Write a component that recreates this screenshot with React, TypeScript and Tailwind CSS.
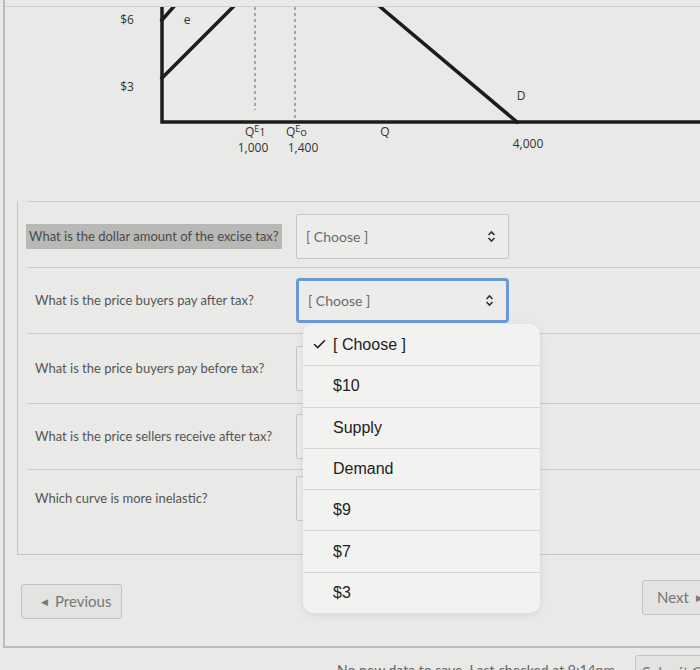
import { Check } from 'lucide-react';

const questions = [
	{ text: 'What is the dollar amount of the excise tax?', h: 'h-[66px] pt-[4px]', highlight: true, visible: true },
	{ text: 'What is the price buyers pay after tax?', h: 'h-[66px]', focused: true, visible: true },
	{ text: 'What is the price buyers pay before tax?', h: 'h-[70px]' },
	{ text: 'What is the price sellers receive after tax?', h: 'h-[66px]' },
	{ text: 'Which curve is more inelastic?', h: 'h-[85px] items-start pt-[6px]' },
];

const options = ['[ Choose ]', '$10', 'Supply', 'Demand', '$9', '$7', '$3'];

function Arrows() {
	return (
		<svg width="9" height="13" viewBox="0 0 9 13" fill="none" stroke="#333" strokeWidth="1.6">
			<path d="M1.5 5 L4.5 2 L7.5 5" />
			<path d="M1.5 8 L4.5 11 L7.5 8" />
		</svg>
	);
}

function Graph() {
	const label = { fontFamily: '"Open Sans", sans-serif', fontSize: 12, fill: '#333' };
	return (
		<svg width="600" height="153" viewBox="100 7 600 153" className="ml-[95px] block">
			<g stroke="#1c1c1c" strokeWidth="3.5" fill="none" strokeLinecap="square">
				<path d="M162 0 L162 122 L700 122" />
				<path d="M162 78 L240 0" />
				<path d="M162 20 L177 3" />
				<path d="M372 0 L517 122" />
			</g>
			<g stroke="#666" strokeWidth="1" strokeDasharray="3 3">
				<path d="M255 7 L255 110" />
				<path d="M295 7 L295 120" />
			</g>
			<text x="127" y="24" textAnchor="middle" {...label}>$6</text>
			<text x="127" y="91" textAnchor="middle" {...label}>$3</text>
			<text x="187" y="24" textAnchor="middle" {...label}>e</text>
			<text x="521" y="100" textAnchor="middle" {...label}>D</text>
			<text x="385" y="136" textAnchor="middle" {...label}>Q</text>
			<text x="245" y="136" {...label}>
				Q<tspan dy="-4" fontSize="9">E</tspan><tspan dy="4" fontSize="11">1</tspan>
			</text>
			<text x="286" y="136" {...label}>
				Q<tspan dy="-4" fontSize="9">E</tspan><tspan dy="4" fontSize="11">o</tspan>
			</text>
			<text x="253" y="152" textAnchor="middle" {...label}>1,000</text>
			<text x="303" y="152" textAnchor="middle" {...label}>1,400</text>
			<text x="528" y="148" textAnchor="middle" {...label}>4,000</text>
		</svg>
	);
}

export default function App() {
	return (
		<div className="relative w-[700px] h-[670px] overflow-hidden bg-[#e9e9e7] font-['Lato',sans-serif]">
			<div className="ml-[3px] h-[648px] border-l-2 border-b-2 border-[#bcbcba] pt-[6px]">
				<div className="border-t border-[#cfcfcd]">
					<Graph />
				</div>

				<div className="mt-[41px] ml-[12px] border-l border-b border-[#c4c4c2]">
					{questions.map((q, i) => (
						<div key={i} className={`ml-[9px] border-t border-[#cbcbc9] flex items-center ${q.h}`}>
							<div className="w-[269px] h-[45px] shrink-0 flex items-center">
								<span
									className={`py-[4px] text-[13px] leading-[17px] ${
										q.highlight
											? 'px-[3px] -ml-[1px] bg-[#b8b8b6] text-[#4a4a4a]'
											: 'px-2 text-[#555]'
									}`}
								>
									{q.text}
								</span>
							</div>
							<div
								className={`w-[213px] h-[45px] flex items-center justify-between pl-[9px] pr-[12px] bg-[#ececea] ${
									q.focused
										? 'border-[3px] border-[#6b9bcd] rounded-[4px]'
										: 'border border-[#c6c6c4] rounded-[2px]'
								}`}
							>
								{q.visible && <span className="text-[14px] text-[#6a6a6a]">[ Choose ]</span>}
								<Arrows />
							</div>
						</div>
					))}
				</div>

				<div className="flex items-start mt-[29px]">
					<button className="ml-[16px] w-[101px] h-[35px] flex items-center gap-[7px] pl-[19px] border border-[#c3c3c1] rounded-[3px] bg-[#e3e3e1] text-[15px] text-[#777]">
						<span className="text-[9px]">◀</span>
						Previous
					</button>
					<button className="ml-auto mr-[-20px] -mt-[4px] w-[78px] h-[35px] flex items-center gap-[7px] pl-[14px] border border-[#c3c3c1] rounded-[3px] bg-[#e3e3e1] text-[15px] text-[#777]">
						Next
						<span className="text-[9px]">▶</span>
					</button>
				</div>
			</div>

			<div className="flex items-start">
				<span className="ml-[337px] mt-[12px] text-[14px] leading-[20px] text-[#666] whitespace-nowrap">
					No new data to save. Last checked at 9:14pm
				</span>
				<button className="ml-auto mr-[-30px] mt-[7px] w-[95px] h-[35px] border border-[#c3c3c1] rounded-[3px] bg-[#e3e3e1] text-[15px] text-[#777]">
					Submit Quiz
				</button>
			</div>

			<div className="absolute left-[303px] top-[324px] w-[237px] rounded-[10px] bg-[#f2f2f1] shadow-[0_2px_8px_rgba(0,0,0,0.08)] font-['Liberation_Sans',sans-serif]">
				{options.map((o, i) => (
					<div
						key={o}
						className={`h-[41.3px] flex items-center text-[16px] text-[#222] ${
							i > 0 ? 'border-t border-[#d6d6d4] pl-[30px]' : 'pl-[9px] gap-[6px]'
						}`}
					>
						{i === 0 && <Check size={15} strokeWidth={2.5} className="text-[#222]" />}
						{o}
					</div>
				))}
			</div>
		</div>
	);
}
